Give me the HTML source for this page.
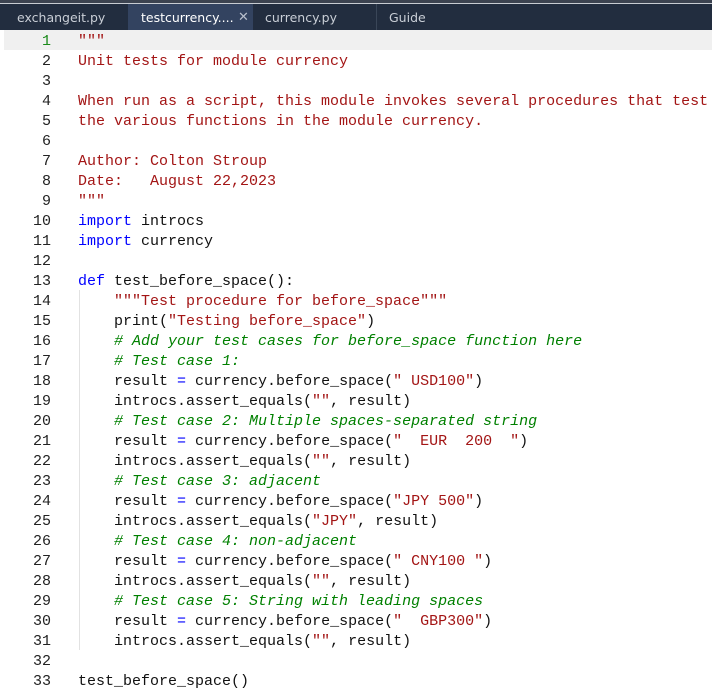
<!DOCTYPE html>
<html><head><meta charset="utf-8"><style>
html,body{margin:0;padding:0;width:712px;height:692px;overflow:hidden;background:#fff;}
.top{position:absolute;left:0;top:0;width:712px;height:3px;background:#3c4350;}
.topline{position:absolute;left:0;top:3px;width:712px;height:1px;background:#c8ccd2;}
.tabs{position:absolute;left:0;top:4px;width:712px;height:26px;background:#222d3f;font-family:"DejaVu Sans","Liberation Sans",sans-serif;font-size:12.5px;color:#c9ced6;}
.tab{position:absolute;top:1px;height:26px;line-height:26px;}
.lb{position:absolute;left:0;top:0;width:4px;height:692px;background:#2a2f38;}
.ed{position:absolute;left:4px;top:30px;width:708px;height:662px;background:#fff;}
.hl{position:absolute;left:4px;top:30px;width:708px;height:20px;background:#f0f0f0;}
.guide{position:absolute;left:79px;top:290px;width:1px;height:360px;background:#e2e2e2;}
pre{position:absolute;margin:0;top:32px;font-family:"Liberation Mono",monospace;font-size:15px;line-height:20px;}
.num{left:0;width:51px;text-align:right;color:#222;}
.code{left:78px;color:#111;}
.s{color:#a31515;}.k{color:#0000ff;}.c{color:#008000;font-style:italic;}
</style></head><body>
<div class="ed"></div><div class="hl"></div><div class="guide"></div>
<div class="top"></div><div class="topline"></div>
<div class="tabs">
<div class="tab" style="left:17px">exchangeit.py</div>
<div class="tab" style="left:128px;top:0;width:125px;background:#334360;color:#fff"><span style="margin-left:13px;position:relative;top:1px">testcurrency....</span><span style="position:absolute;left:110px;top:1px;color:#b8bfcc;font-size:13px">✕</span></div>
<div class="tab" style="left:265px">currency.py</div>
<div style="position:absolute;left:376px;top:0;width:1px;height:26px;background:#3a4658"></div>
<div class="tab" style="left:389px">Guide</div>
</div>
<pre class="num"><span style="color:#1a8a1a">1</span>
2
3
4
5
6
7
8
9
10
11
12
13
14
15
16
17
18
19
20
21
22
23
24
25
26
27
28
29
30
31
32
33</pre>
<pre class="code"><span class="s">"""
Unit tests for module currency

When run as a script, this module invokes several procedures that test
the various functions in the module currency.

Author: Colton Stroup
Date:   August 22,2023
"""</span>
<span class="k">import</span> introcs
<span class="k">import</span> currency

<span class="k">def</span> test_before_space():
    <span class="s">"""Test procedure for before_space"""</span>
    print(<span class="s">"Testing before_space"</span>)
    <span class="c"># Add your test cases for before_space function here</span>
    <span class="c"># Test case 1:</span>
    result <span class="k">=</span> currency.before_space(<span class="s">" USD100"</span>)
    introcs.assert_equals(<span class="s">""</span>, result)
    <span class="c"># Test case 2: Multiple spaces-separated string</span>
    result <span class="k">=</span> currency.before_space(<span class="s">"  EUR  200  "</span>)
    introcs.assert_equals(<span class="s">""</span>, result)
    <span class="c"># Test case 3: adjacent</span>
    result <span class="k">=</span> currency.before_space(<span class="s">"JPY 500"</span>)
    introcs.assert_equals(<span class="s">"JPY"</span>, result)
    <span class="c"># Test case 4: non-adjacent</span>
    result <span class="k">=</span> currency.before_space(<span class="s">" CNY100 "</span>)
    introcs.assert_equals(<span class="s">""</span>, result)
    <span class="c"># Test case 5: String with leading spaces</span>
    result <span class="k">=</span> currency.before_space(<span class="s">"  GBP300"</span>)
    introcs.assert_equals(<span class="s">""</span>, result)

test_before_space()</pre>
</body></html>
